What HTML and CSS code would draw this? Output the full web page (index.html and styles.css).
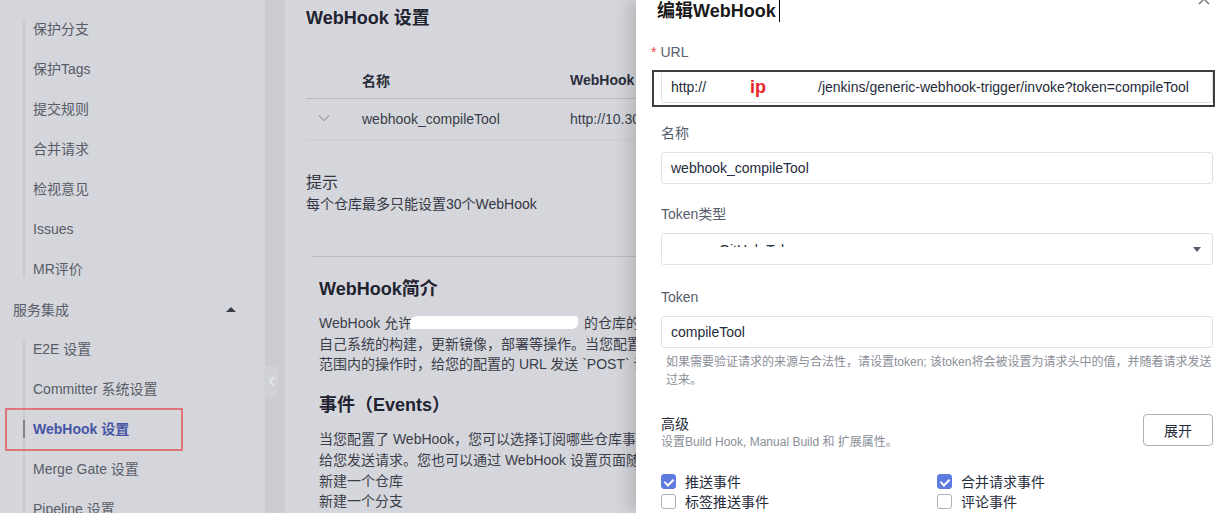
FILE: index.html
```html
<!DOCTYPE html>
<html lang="zh-CN">
<head>
    <meta charset="UTF-8">
    <title>WebHook 设置</title>
    <link rel="stylesheet" href="styles.css">
</head>
<body>
    <div class="page">
        <aside class="sidebar">
            <ul class="menu">
                <li>保护分支</li>
                <li>保护Tags</li>
                <li>提交规则</li>
                <li>合并请求</li>
                <li>检视意见</li>
                <li>Issues</li>
                <li>MR评价</li>
            </ul>
            <div class="group-title">服务集成<span class="caret-up"></span></div>
            <ul class="menu">
                <li>E2E 设置</li>
                <li>Committer 系统设置</li>
                <li class="active">WebHook 设置</li>
                <li>Merge Gate 设置</li>
                <li>Pipeline 设置</li>
            </ul>
            <div class="mark-box"></div>
        </aside>

        <div class="gutter"><span class="collapse-btn">&#x2039;</span></div>

        <main class="content">
            <h2 class="page-title">WebHook 设置</h2>

            <div class="hook-table">
                <div class="hook-row head">
                    <span></span>
                    <span>名称</span>
                    <span>WebHook</span>
                </div>
                <div class="hook-row">
                    <span class="chev">
                        <svg width="12" height="8" viewBox="0 0 12 8"><path d="M1 1.5l5 5 5-5" fill="none" stroke="#a3a5ad" stroke-width="1.4"/></svg>
                    </span>
                    <span>webhook_compileTool</span>
                    <span>http://10.30.0.12/jenkins/generic-webhook-trigger/invoke?token=compileTool</span>
                </div>
            </div>

            <div class="tip">
                <div class="tip-title">提示</div>
                <div>每个仓库最多只能设置30个WebHook</div>
            </div>

            <div class="intro">
                <h3>WebHook简介</h3>
                <p>WebHook 允许<span class="redact"></span>的仓库的事件，来触发<br>自己系统的构建，更新镜像，部署等操作。当您配置了 WebHook 后<br>范围内的操作时，给您的配置的 URL 发送 `POST` 请求。</p>
                <h3>事件（Events）</h3>
                <p>当您配置了 WebHook，您可以选择订阅哪些仓库事件，当事件触发时<br>给您发送请求。您也可以通过 WebHook 设置页面随时修改订阅事件。<br>新建一个仓库<br>新建一个分支</p>
            </div>
        </main>

        <div class="drawer">
            <div class="drawer-head">
                <h2>编辑WebHook<span class="cursor"></span></h2>
                <svg class="close" width="12" height="12" viewBox="0 0 12 12"><path d="M1 1l10 10M11 1L1 11" stroke="#6b6f7a" stroke-width="1.4"/></svg>
            </div>

            <div class="form">
                <div class="form-item">
                    <label class="required">URL</label>
                    <div class="input url-input">
                        <span>http://</span><span class="gap-a"></span><span class="ip">ip</span><span class="gap-b"></span><span>/jenkins/generic-webhook-trigger/invoke?token=compileTool</span>
                    </div>
                    <div class="mark-rect"></div>
                </div>

                <div class="form-item">
                    <label>名称</label>
                    <div class="input">webhook_compileTool</div>
                </div>

                <div class="form-item wide">
                    <label>Token类型</label>
                    <div class="input select">
                        <span class="hidden-val"><span>GitHub Token</span></span>
                        <span class="caret-down"></span>
                    </div>
                </div>

                <div class="form-item">
                    <label>Token</label>
                    <div class="input">compileTool</div>
                    <p class="hint">如果需要验证请求的来源与合法性，请设置token; 该token将会被设置为请求头中的值，并随着请求发送过来。</p>
                </div>

                <div class="advanced">
                    <div>
                        <div class="adv-title">高级</div>
                        <div class="adv-desc">设置Build Hook, Manual Build 和 扩展属性。</div>
                    </div>
                    <button class="btn">展开</button>
                </div>

                <div class="events">
                    <label class="check"><span class="box on"></span>推送事件</label>
                    <label class="check"><span class="box on"></span>合并请求事件</label>
                    <label class="check"><span class="box"></span>标签推送事件</label>
                    <label class="check"><span class="box"></span>评论事件</label>
                </div>
            </div>
        </div>
    </div>
</body>
</html>
```

FILE: styles.css
```css
* {
    margin: 0;
    padding: 0;
    box-sizing: border-box;
}

body {
    font-family: "Liberation Sans", "Noto Sans CJK SC", sans-serif;
    font-size: 14px;
    width: 1223px;
    height: 513px;
    overflow: hidden;
    background: #d5d6db;
}

.page {
    position: relative;
    display: flex;
    height: 513px;
}

/* 左侧菜单 */
.sidebar {
    position: relative;
    width: 265px;
    flex-shrink: 0;
    padding-top: 9px;
    background: #d5d6db;
    color: #585c69;
}

.menu {
    position: relative;
    list-style: none;
}

.menu::before {
    content: "";
    position: absolute;
    left: 23px;
    top: 12px;
    bottom: 12px;
    width: 2px;
    background: #c8c9cf;
}

.menu li {
    position: relative;
    height: 40px;
    line-height: 40px;
    padding-left: 33px;
    white-space: nowrap;
}

.menu li.active {
    color: #4755a6;
    font-weight: bold;
}

.menu li.active::before {
    content: "";
    position: absolute;
    left: 23px;
    top: 11px;
    width: 2px;
    height: 18px;
    background: #80838c;
}

.group-title {
    display: flex;
    justify-content: space-between;
    align-items: center;
    height: 40px;
    padding: 0 29px 0 13px;
}

.caret-up {
    width: 0;
    height: 0;
    border-left: 5px solid transparent;
    border-right: 5px solid transparent;
    border-bottom: 5px solid #3b3e49;
}

.mark-box {
    position: absolute;
    left: 5px;
    top: 408px;
    width: 178px;
    height: 43px;
    border: 2px solid #e3737b;
}

.gutter {
    width: 20px;
    flex-shrink: 0;
    background: #cbccd1;
    padding-top: 366px;
}

.collapse-btn {
    display: block;
    width: 12px;
    height: 31px;
    margin-left: 1px;
    background: #d1d2d7;
    border-radius: 0 4px 4px 0;
    color: #e6e7eb;
    font-size: 22px;
    line-height: 29px;
    text-align: center;
}

/* 主内容 */
.content {
    flex: 1;
    padding-left: 21px;
    color: #343844;
    white-space: nowrap;
    overflow: hidden;
}

.page-title {
    margin-top: 6px;
    font-size: 18px;
    line-height: 24px;
    color: #1f2230;
}

.hook-table {
    margin-top: 31px;
}

.hook-row {
    display: grid;
    grid-template-columns: 56px 208px 1fr;
    align-items: center;
    height: 41px;
    border-bottom: 1px solid #cbccd1;
    color: #3a3e4a;
}

.hook-row.head {
    height: 38px;
    border-bottom-color: #b8bac0;
    font-weight: bold;
    color: #2a2d3a;
}

.chev {
    display: flex;
    padding-left: 12px;
    padding-bottom: 3px;
}

.tip {
    margin-top: 32px;
    line-height: 21px;
    color: #343844;
}

.tip-title {
    font-size: 16px;
    line-height: 22px;
}

.intro {
    margin: 41px 0 0 6px;
    padding: 20px 0 0 7px;
    border-top: 1px solid #bcbec4;
}

.intro h3 {
    font-size: 18px;
    line-height: 24px;
    color: #1f2230;
}

.intro p {
    margin: 12px 0 18px;
    line-height: 20.7px;
    color: #3a3e4a;
}

.redact {
    display: inline-block;
    width: 168px;
    height: 13px;
    margin: 0 6px 0 -2px;
    vertical-align: -1px;
    background: #fff;
    border-radius: 7px 3px 6px 2px;
}

/* 右侧抽屉 */
.drawer {
    position: absolute;
    top: 0;
    left: 636px;
    width: 587px;
    height: 513px;
    background: #fff;
    box-shadow: -6px 0 16px rgba(0, 0, 0, 0.16);
}

.drawer-head {
    position: relative;
    padding-left: 21px;
}

.drawer-head h2 {
    font-size: 18px;
    line-height: 19px;
    color: #191919;
}

.cursor {
    display: inline-block;
    width: 1px;
    height: 22px;
    margin-left: 3px;
    vertical-align: -5px;
    background: #000;
}

.close {
    position: absolute;
    right: 13px;
    top: -7px;
}

.form {
    padding: 20px 10px 0 25px;
}

.form-item {
    position: relative;
    margin-bottom: 20px;
}

.form-item.wide {
    margin-bottom: 22px;
}

.form-item label {
    display: block;
    margin-bottom: 9px;
    line-height: 20px;
    color: #575d6c;
}

.form-item label.required::before {
    content: "*";
    margin-left: -10px;
    margin-right: 4px;
    color: #e54545;
}

.input {
    display: flex;
    align-items: center;
    height: 32px;
    padding-left: 9px;
    border: 1px solid #dfe1e6;
    border-radius: 3px;
    color: #252b3a;
    white-space: nowrap;
    overflow: hidden;
}

.gap-a {
    width: 44px;
}

.ip {
    color: #e8262b;
    font-size: 18px;
    font-weight: bold;
}

.gap-b {
    width: 52px;
}

.mark-rect {
    position: absolute;
    left: -9px;
    right: -2px;
    top: 28px;
    height: 37px;
    border: 2px solid #3d3d3d;
}

.select {
    justify-content: space-between;
    padding-right: 11px;
}

.hidden-val {
    display: block;
    height: 5px;
    margin: -9px 0 0 48px;
    overflow: hidden;
    line-height: 16px;
    color: #252b3a;
}

.caret-down {
    width: 0;
    height: 0;
    border-left: 4px solid transparent;
    border-right: 4px solid transparent;
    border-top: 5px solid #575d6c;
}

.hint {
    margin-top: 5px;
    padding-left: 5px;
    font-size: 12px;
    line-height: 18px;
    color: #8a8e99;
}

.advanced {
    display: flex;
    justify-content: space-between;
    align-items: flex-start;
    margin-top: 25px;
}

.adv-title {
    line-height: 20px;
    color: #252b3a;
}

.adv-desc {
    font-size: 12px;
    line-height: 16px;
    color: #8a8e99;
}

.btn {
    width: 70px;
    height: 32px;
    font-family: inherit;
    font-size: 14px;
    color: #252b3a;
    background: #fff;
    border: 1px solid #adb0b8;
    border-radius: 4px;
}

.events {
    display: grid;
    grid-template-columns: 276px 1fr;
    margin-top: 21px;
}

.check {
    display: flex;
    align-items: center;
    height: 20px;
    color: #252b3a;
}

.box {
    width: 15px;
    height: 15px;
    margin-right: 9px;
    border: 1px solid #adb0b8;
    border-radius: 3px;
}

.box.on {
    position: relative;
    background: #5e7ce0;
    border-color: #5e7ce0;
}

.box.on::after {
    content: "";
    position: absolute;
    left: 4px;
    top: 2px;
    width: 4px;
    height: 7px;
    border: solid #fff;
    border-width: 0 2px 2px 0;
    transform: rotate(45deg);
}
```
